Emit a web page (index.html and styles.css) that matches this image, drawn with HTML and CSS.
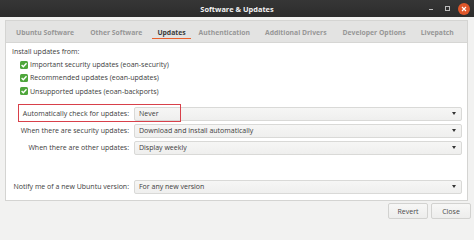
FILE: index.html
```html
<!DOCTYPE html>
<html>
<head>
<meta charset="utf-8">
<link rel="stylesheet" href="styles.css">
</head>
<body>
<div class="titlebar">
  <div class="tb-spacer"></div>
  <div class="tb-title">Software &amp; Updates</div>
  <div class="tb-controls">
    <span class="ctl-min"></span>
    <span class="ctl-max"></span>
    <span class="ctl-close">
      <svg width="6" height="6" viewBox="0 0 6 6"><path d="M1 1L5 5M5 1L1 5" stroke="#fff" stroke-width="1.1"/></svg>
    </span>
  </div>
</div>
<div class="window">
  <div class="notebook">
    <div class="tabs">
      <div class="tab t1">Ubuntu Software</div>
      <div class="tab t2">Other Software</div>
      <div class="tab t3 active">Updates</div>
      <div class="tab t4">Authentication</div>
      <div class="tab t5">Additional Drivers</div>
      <div class="tab t6">Developer Options</div>
      <div class="tab t7">Livepatch</div>
    </div>
    <div class="page">
      <div class="heading">Install updates from:</div>
      <div class="checks">
        <div class="check"><span class="box"><svg width="8" height="8" viewBox="0 0 8 8"><path d="M1.6 4.1L3.3 5.8L6.5 2.3" fill="none" stroke="#fff" stroke-width="1.4"/></svg></span>Important security updates (eoan-security)</div>
        <div class="check"><span class="box"><svg width="8" height="8" viewBox="0 0 8 8"><path d="M1.6 4.1L3.3 5.8L6.5 2.3" fill="none" stroke="#fff" stroke-width="1.4"/></svg></span>Recommended updates (eoan-updates)</div>
        <div class="check"><span class="box"><svg width="8" height="8" viewBox="0 0 8 8"><path d="M1.6 4.1L3.3 5.8L6.5 2.3" fill="none" stroke="#fff" stroke-width="1.4"/></svg></span>Unsupported updates (eoan-backports)</div>
      </div>
      <div class="form">
        <div class="row highlighted">
          <div class="label">Automatically check for updates:</div>
          <div class="combo"><span>Never</span><span class="arrow"></span></div>
          <div class="redbox"></div>
        </div>
        <div class="row">
          <div class="label">When there are security updates:</div>
          <div class="combo"><span>Download and install automatically</span><span class="arrow"></span></div>
        </div>
        <div class="row">
          <div class="label">When there are other updates:</div>
          <div class="combo"><span>Display weekly</span><span class="arrow"></span></div>
        </div>
        <div class="row notify">
          <div class="label">Notify me of a new Ubuntu version:</div>
          <div class="combo"><span>For any new version</span><span class="arrow"></span></div>
        </div>
      </div>
    </div>
  </div>
  <div class="buttons">
    <div class="btn">Revert</div>
    <div class="btn">Close</div>
  </div>
</div>
</body>
</html>
```

FILE: styles.css
```css
* { box-sizing: border-box; }
html, body { margin: 0; padding: 0; }
body {
  width: 474px;
  height: 220px;
  overflow: hidden;
  background: #f2f2f1;
  font-family: "Open Sans", "DejaVu Sans", sans-serif;
  font-size: 7px;
  color: #3c3c3c;
}
.titlebar {
  height: 17px;
  background: linear-gradient(#363636, #2c2c2c);
  display: grid;
  grid-template-columns: 1fr auto 1fr;
  align-items: center;
}
.tb-title {
  color: #f2f2f2;
  font-weight: 700;
  font-size: 7.4px;
}
.tb-controls {
  display: flex;
  justify-content: flex-end;
  align-items: center;
  gap: 0;
  padding-right: 4px;
}
.ctl-min {
  width: 4px;
  height: 1px;
  background: #bdbdbd;
  margin-right: 12px;
  margin-top: 2px;
}
.ctl-max {
  width: 5px;
  height: 5px;
  border: 1px solid #bdbdbd;
  margin-right: 8px;
}
.ctl-close {
  width: 12px;
  height: 12px;
  border-radius: 50%;
  background: #e0572a;
  display: flex;
  align-items: center;
  justify-content: center;
}
.window {
  padding: 3px 6px 0 5px;
}
.notebook {
  border: 1px solid #d4d4d2;
  height: 181px;
  display: flex;
  flex-direction: column;
}
.tabs {
  height: 22px;
  background: #e3e3e2;
  border-bottom: 1px solid #d6d6d4;
  display: flex;
  align-items: stretch;
  font-weight: 700;
  color: #979797;
  font-size: 6.8px;
}
.tab {
  display: flex;
  align-items: center;
  padding-top: 1px;
}
.t1 { padding-left: 10px; }
.t2 { margin-left: 16px; }
.t3 { margin-left: 15px; }
.t4 { margin-left: 13px; }
.t5 { margin-left: 15px; }
.t6 { margin-left: 16px; }
.t7 { margin-left: 15px; }
.tab.active {
  color: #3a3a3a;
  position: relative;
}
.tab.active::after {
  content: "";
  position: absolute;
  left: -5px;
  right: -5px;
  bottom: 3px;
  height: 1.5px;
  background: #e9602c;
}
.page {
  flex: 1;
  background: #ffffff;
  padding: 0 0 0 6px;
  display: flex;
  flex-direction: column;
}
.heading {
  height: 13px;
  margin-top: 2px;
  display: flex;
  align-items: center;
}
.checks {
  padding-left: 8px;
  display: flex;
  flex-direction: column;
}
.check {
  height: 13.3px;
  display: flex;
  align-items: center;
}
.box {
  width: 8px;
  height: 8px;
  border-radius: 1.5px;
  background: #4ea63b;
  margin-right: 2px;
  display: flex;
}
.form {
  margin-top: 9px;
  display: flex;
  flex-direction: column;
  gap: 3px;
}
.row {
  display: flex;
  align-items: center;
  position: relative;
  height: 14px;
}
.row.notify {
  margin-top: 22px;
}
.label {
  width: 122px;
  text-align: right;
  padding-right: 5px;
  white-space: nowrap;
}
.combo {
  width: 328px;
  height: 14px;
  border: 1px solid #d9d9d7;
  border-radius: 2px;
  background: linear-gradient(#f6f6f5, #efefee);
  display: flex;
  align-items: center;
  justify-content: space-between;
  padding: 0 5px 0 4px;
  color: #3c3c3c;
}
.arrow {
  width: 0;
  height: 0;
  border-left: 2.5px solid transparent;
  border-right: 2.5px solid transparent;
  border-top: 3px solid #333;
}
.redbox {
  position: absolute;
  left: 6px;
  top: -3px;
  width: 163px;
  height: 18px;
  border: 1px solid #d8404a;
}
.buttons {
  display: flex;
  justify-content: flex-end;
  gap: 3px;
  padding-top: 2px;
  margin-right: -3px;
}
.btn {
  width: 40px;
  height: 16px;
  border: 1px solid #d2d2d0;
  border-radius: 2px;
  background: linear-gradient(#f7f7f6, #ededec);
  display: flex;
  align-items: center;
  justify-content: center;
  color: #4a4a4a;
}
```
